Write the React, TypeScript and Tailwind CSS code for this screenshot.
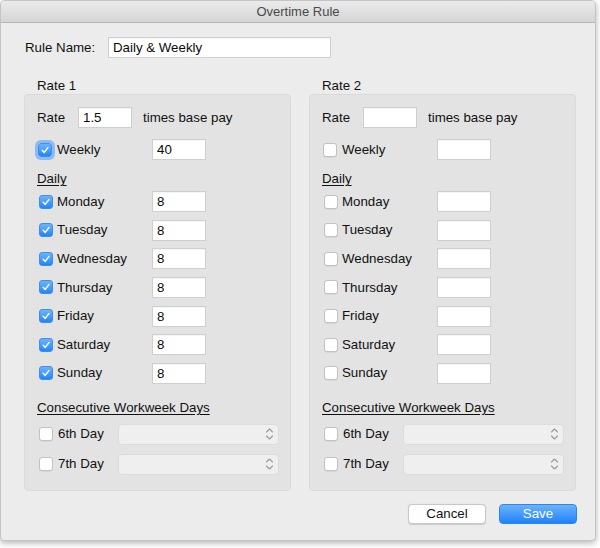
import React from 'react';

const font = { fontFamily: '"Liberation Sans", Arial, sans-serif' };

function Check({ checked, focus }: { checked?: boolean; focus?: boolean }) {
  return (
    <div
      className={
        'w-[14px] h-[14px] rounded-[3px] flex items-center justify-center shrink-0 ' +
        (checked
          ? 'bg-gradient-to-b from-[#6db3fb] to-[#1e84fa] border border-[#3d8fe8]'
          : 'bg-white border border-[#c2c2c2] shadow-[0_0.5px_0.5px_rgba(0,0,0,0.1)]') +
        (focus ? ' ring-[3px] ring-[#8bbbf0]' : '')
      }
    >
      {checked && (
        <svg width="10" height="10" viewBox="0 0 10 10">
          <path d="M2.2 5.3 L4.2 7.4 L7.9 2.6" fill="none" stroke="white" strokeWidth="1.5" strokeLinecap="round" strokeLinejoin="round" />
        </svg>
      )}
    </div>
  );
}

function Field({ value, w = 'w-[54px]' }: { value?: string; w?: string }) {
  return (
    <div className={`${w} h-[21px] bg-white border border-[#cfcfcf] shadow-[inset_0_1px_0_rgba(0,0,0,0.04)] pl-[4px] text-[13.3px] leading-[19px] text-[#0a0a0a]`}>
      {value}
    </div>
  );
}

function Select() {
  return (
    <div className="w-[161px] h-[21px] rounded-[4px] bg-[#efefef] border border-[#dcdcdc] flex items-center justify-end pr-[4px]">
      <svg width="9" height="14" viewBox="0 0 9 14">
        <path d="M1.5 5 L4.5 2 L7.5 5 M1.5 9 L4.5 12 L7.5 9" fill="none" stroke="#9a9a9a" strokeWidth="1.1" strokeLinecap="round" strokeLinejoin="round" />
      </svg>
    </div>
  );
}

const days = ['Monday', 'Tuesday', 'Wednesday', 'Thursday', 'Friday', 'Saturday', 'Sunday'];

function RatePanel({ title, filled }: { title: string; filled: boolean }) {
  return (
    <div className="flex flex-col">
      <div className="h-[16px] leading-[16px] pl-[13px] text-[13.3px] text-[#111]">{title}</div>
      <div className="w-[267px] h-[397px] rounded-[4px] bg-[#e3e3e3] border border-[#dadada] pt-[12px] pl-[12px] flex flex-col text-[13.3px] text-[#111]">
        <div className="flex items-center h-[21px]">
          <span className="w-[41px]">Rate</span>
          <Field value={filled ? '1.5' : ''} />
          <span className="ml-[11px]">times base pay</span>
        </div>
        <div className="flex items-center h-[21px] mt-[11px]">
          <div className="w-[115px] flex items-center pl-[1px] gap-[5px]">
            <Check checked={filled} focus={filled} />
            <span>Weekly</span>
          </div>
          <Field value={filled ? '40' : ''} />
        </div>
        <div className="mt-[11px] h-[16px] leading-[16px] underline underline-offset-2">Daily</div>
        <div className="flex flex-col gap-[7.67px] mt-[4px]">
          {days.map((d) => (
            <div key={d} className="flex items-center h-[21px]">
              <div className="w-[115px] flex items-center pl-[2px] gap-[4px]">
                <Check checked={filled} />
                <span>{d}</span>
              </div>
              <Field value={filled ? '8' : ''} />
            </div>
          ))}
        </div>
        <div className="mt-[16px] h-[16px] leading-[16px] underline underline-offset-2">Consecutive Workweek Days</div>
        <div className="flex items-center h-[21px] mt-[8px]">
          <div className="w-[81px] flex items-center pl-[2px] gap-[5px]">
            <Check />
            <span>6th Day</span>
          </div>
          <Select />
        </div>
        <div className="flex items-center h-[21px] mt-[9px]">
          <div className="w-[81px] flex items-center pl-[2px] gap-[5px]">
            <Check />
            <span>7th Day</span>
          </div>
          <Select />
        </div>
      </div>
    </div>
  );
}

export default function App() {
  return (
    <div className="w-[600px] h-[548px] bg-white" style={font}>
      <div className="w-[596px] h-[541px] bg-[#ececec] rounded-t-[5px] rounded-b-[4px] border border-[#c4c4c4] shadow-[0_2px_6px_rgba(0,0,0,0.3)] flex flex-col overflow-hidden">
        <div className="h-[22px] shrink-0 bg-gradient-to-b from-[#ebebeb] to-[#d5d5d5] border-b border-[#b5b5b5] text-center text-[13px] leading-[21px] text-[#4a4a4a]">
          Overtime Rule
        </div>
        <div className="flex items-center mt-[14px] pl-[24px] text-[13.3px] text-[#111]">
          <span className="w-[83px]">Rule Name:</span>
          <Field value="Daily & Weekly" w="w-[223px]" />
        </div>
        <div className="flex gap-[18px] pl-[23px] mt-[20px]">
          <RatePanel title="Rate 1" filled />
          <RatePanel title="Rate 2" filled={false} />
        </div>
        <div className="flex justify-end gap-[13px] pr-[18px] mt-[13px] text-[13.3px]">
          <button className="w-[78px] h-[20px] rounded-[4px] bg-white border border-[#c8c8c8] shadow-[0_0.5px_1px_rgba(0,0,0,0.15)] text-[#111] leading-[18px]">
            Cancel
          </button>
          <button className="w-[78px] h-[20px] rounded-[4px] bg-gradient-to-b from-[#6ab2fa] to-[#1a82fb] border border-[#2d86ec] text-white leading-[18px]">
            Save
          </button>
        </div>
      </div>
    </div>
  );
}
